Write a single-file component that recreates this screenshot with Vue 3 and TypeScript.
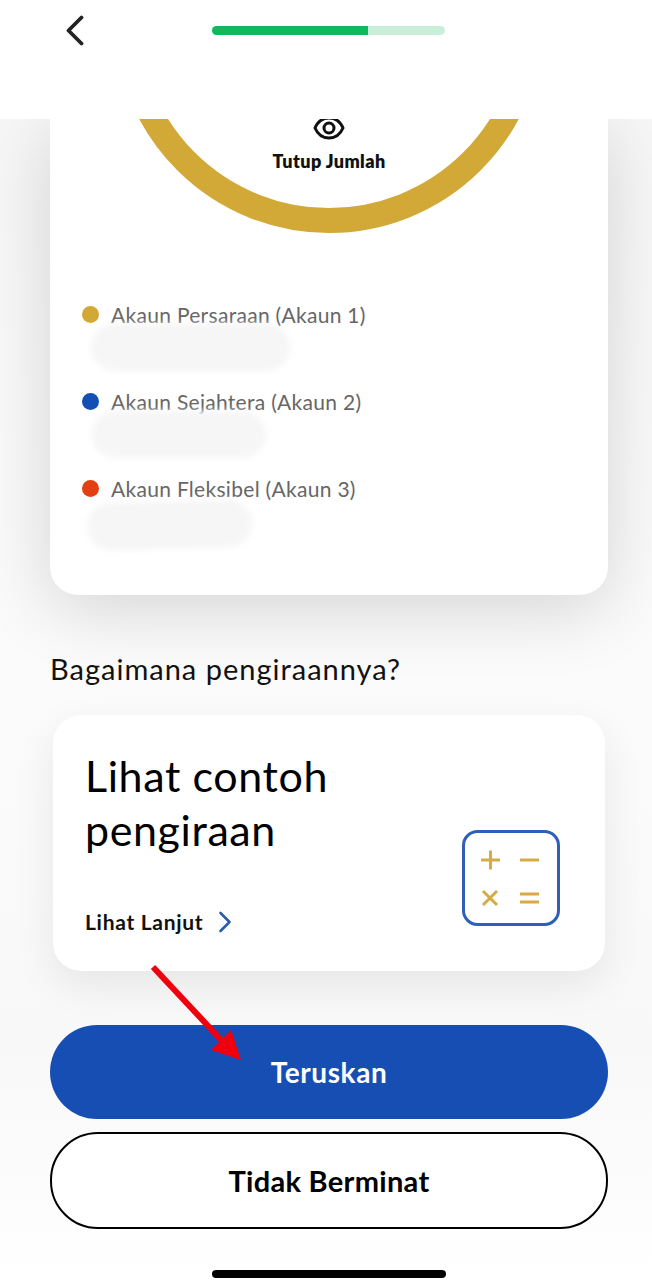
<script setup lang="ts">
interface Account { label: string; dot: string; pill: string }
const accounts: Account[] = [
  { label: 'Akaun Persaraan (Akaun 1)', dot: 'gold', pill: 'p1' },
  { label: 'Akaun Sejahtera (Akaun 2)', dot: 'blue', pill: 'p2' },
  { label: 'Akaun Fleksibel (Akaun 3)', dot: 'red', pill: 'p3' },
]
</script>

<template>
  <div class="screen">
    <header class="top">
      <svg class="back" width="20" height="32" viewBox="0 0 20 32" fill="none">
        <path d="M16.5 2.5 L3.5 15.5 L16.5 28.5" stroke="#222" stroke-width="3.8" stroke-linecap="round" stroke-linejoin="round" />
      </svg>
      <div class="progress"><div class="progress-fill"></div></div>
    </header>

    <main class="content">
      <section class="balance-card">
        <div class="chart">
          <svg class="ring" width="558" height="130" viewBox="0 0 558 130" fill="none">
            <circle cx="279" cy="-101" r="202.500" stroke="#d2a836" stroke-width="25" />
          </svg>
          <div class="chart-center">
            <svg class="eye" width="32" height="24" viewBox="0 0 32 24" fill="none">
              <path d="M2 12 C5 5 10 2 16 2 C22 2 27 5 30 12 C27 19 22 22 16 22 C10 22 5 19 2 12 Z" stroke="#111" stroke-width="3" />
              <circle cx="16" cy="12" r="5" stroke="#111" stroke-width="3" />
            </svg>
            <span class="chart-label">Tutup Jumlah</span>
          </div>
        </div>
        <ul class="legend">
          <li v-for="a in accounts" :key="a.label" class="legend-row">
            <div class="legend-head">
              <span class="dot" :class="a.dot"></span>
              <span class="legend-label">{{ a.label }}</span>
            </div>
            <div class="pill" :class="a.pill"></div>
          </li>
        </ul>
      </section>

      <h2 class="question">Bagaimana pengiraannya?</h2>

      <section class="example-card">
        <div class="example-text">
          <h3 class="example-title">Lihat contoh<br />pengiraan</h3>
          <div class="more">
            <span>Lihat Lanjut</span>
            <svg width="14" height="22" viewBox="0 0 14 22" fill="none">
              <path d="M2.5 2 L11.5 11 L2.5 20" stroke="#2a5bb5" stroke-width="2.6" stroke-linecap="round" stroke-linejoin="round" />
            </svg>
          </div>
        </div>
        <svg class="calc" width="98" height="96" viewBox="0 0 98 96" fill="none">
          <rect x="1.5" y="1.5" width="95" height="93" rx="14" stroke="#2f5fb8" stroke-width="3" />
          <g stroke="#d6ab45" stroke-width="3">
            <path d="M19 30 H38 M28.500 20.500 V39.500" />
            <path d="M58 30 H77" />
            <path d="M21 61 L35 75 M35 61 L21 75" />
            <path d="M58 64 H77 M58 72 H77" />
          </g>
        </svg>
      </section>

      <div class="actions">
        <button class="btn primary" type="button">Teruskan</button>
        <button class="btn outline" type="button">Tidak Berminat</button>
      </div>

      <div class="home-bar"></div>
    </main>

    <svg class="arrow" width="110" height="110" viewBox="0 0 110 110" fill="none">
      <path d="M4 4 L76 81" stroke="#f0000f" stroke-width="6" />
      <path d="M92 97 L62 87 L82 67 Z" fill="#f0000f" />
    </svg>
  </div>
</template>

<style>
html, body { margin: 0; background: #fafafa; }
</style>

<style scoped>
* { box-sizing: border-box; }
.screen {
  position: relative;
  width: 652px;
  height: 1280px;
  overflow: hidden;
  display: flex;
  flex-direction: column;
  background: #fafafa;
  font-family: Lato, "Open Sans", "Liberation Sans", sans-serif;
  color: #000;
}
.top {
  flex: none;
  position: relative;
  z-index: 2;
  height: 119px;
  background: #fff;
  padding: 26px 0 0 5px;
  display: flex;
  justify-content: center;
  align-items: flex-start;
}
.back { position: absolute; left: 65px; top: 15px; }
.progress {
  width: 233px;
  height: 9px;
  border-radius: 5px;
  background: #c9efdb;
  overflow: hidden;
}
.progress-fill { width: 156px; height: 100%; background: #10b95c; }

.content {
  flex: 1;
  overflow: hidden;
  display: flex;
  flex-direction: column;
  background: linear-gradient(#f6f6f6, #fbfbfb 50%, #f8f8f8 80%, #fff);
}
.balance-card {
  flex: none;
  height: 476px;
  margin: 0 44px 0 50px;
  background: #fff;
  border-radius: 0 0 28px 28px;
  box-shadow: 0 15px 70px rgba(0, 0, 0, 0.15);
  display: flex;
  flex-direction: column;
}
.chart { position: relative; height: 183px; flex: none; }
.ring { display: block; }
.chart-center {
  position: absolute;
  left: 0;
  right: 0;
  top: -3px;
  display: flex;
  flex-direction: column;
  align-items: center;
}
.chart-label {
  margin-top: 11px;
  font-size: 18px;
  font-weight: 800;
  letter-spacing: 0.4px;
  line-height: 20px;
  color: #111;
}
.legend { list-style: none; margin: 0; padding: 0 0 0 32px; }
.legend-row { margin-bottom: 18px; }
.legend-head { display: flex; align-items: center; height: 24px; gap: 12px; }
.dot { width: 17px; height: 17px; border-radius: 50%; flex: none; }
.dot.gold { background: #d2a836; }
.dot.blue { background: #144fb5; }
.dot.red { background: #e23f12; }
.legend-label { font-size: 21px; letter-spacing: 0.3px; color: #666; white-space: nowrap; }
.pill {
  height: 47px;
  margin-top: -2px;
  border-radius: 24px;
  background: #f6f6f6;
  filter: blur(3px);
}
.p1 { width: 199px; margin-left: 9px; }
.p2 { width: 174px; margin-left: 10px; }
.p3 { width: 165px; margin-left: 5px; margin-top: 1px; height: 48px; transform: rotate(-1.5deg); }

.question {
  margin: 56px 0 0 50px;
  font-size: 29px;
  letter-spacing: 1px;
  line-height: 36px;
  font-weight: 400;
  color: #111;
}
.example-card {
  flex: none;
  height: 256px;
  margin: 28px 47px 0 53px;
  background: #fff;
  border-radius: 28px;
  box-shadow: 0 14px 40px rgba(0, 0, 0, 0.08);
  padding: 34px 45px 45px 32px;
  display: flex;
  justify-content: space-between;
  align-items: flex-end;
}
.example-text {
  height: 100%;
  display: flex;
  flex-direction: column;
  justify-content: space-between;
}
.example-title {
  margin: 0;
  font-size: 43px;
  letter-spacing: 0.6px;
  line-height: 54px;
  font-weight: 400;
  color: #000;
}
.more {
  display: flex;
  align-items: center;
  gap: 15px;
  font-size: 21px;
  letter-spacing: 0.7px;
  font-weight: 700;
  color: #111;
  margin-bottom: -8px;
}
.calc { display: block; }
.actions {
  margin: 54px 44px 0 50px;
  display: flex;
  flex-direction: column;
  gap: 13px;
}
.btn {
  width: 558px;
  border-radius: 48px;
  font-family: inherit;
  padding: 0;
  display: block;
}
.primary {
  height: 94px;
  background: #164eb4;
  border: 0;
  color: #fff;
  font-size: 28px;
  letter-spacing: 0.6px;
  font-weight: 700;
}
.outline {
  height: 97px;
  background: #fff;
  border: 2px solid #000;
  color: #000;
  font-size: 29px;
  letter-spacing: 0.3px;
  font-weight: 700;
}
.home-bar {
  width: 234px;
  height: 8px;
  margin: 41px 0 0 212px;
  border-radius: 4px;
  background: #000;
  flex: none;
}
.arrow { position: absolute; left: 149px; top: 963px; z-index: 3; }
</style>
